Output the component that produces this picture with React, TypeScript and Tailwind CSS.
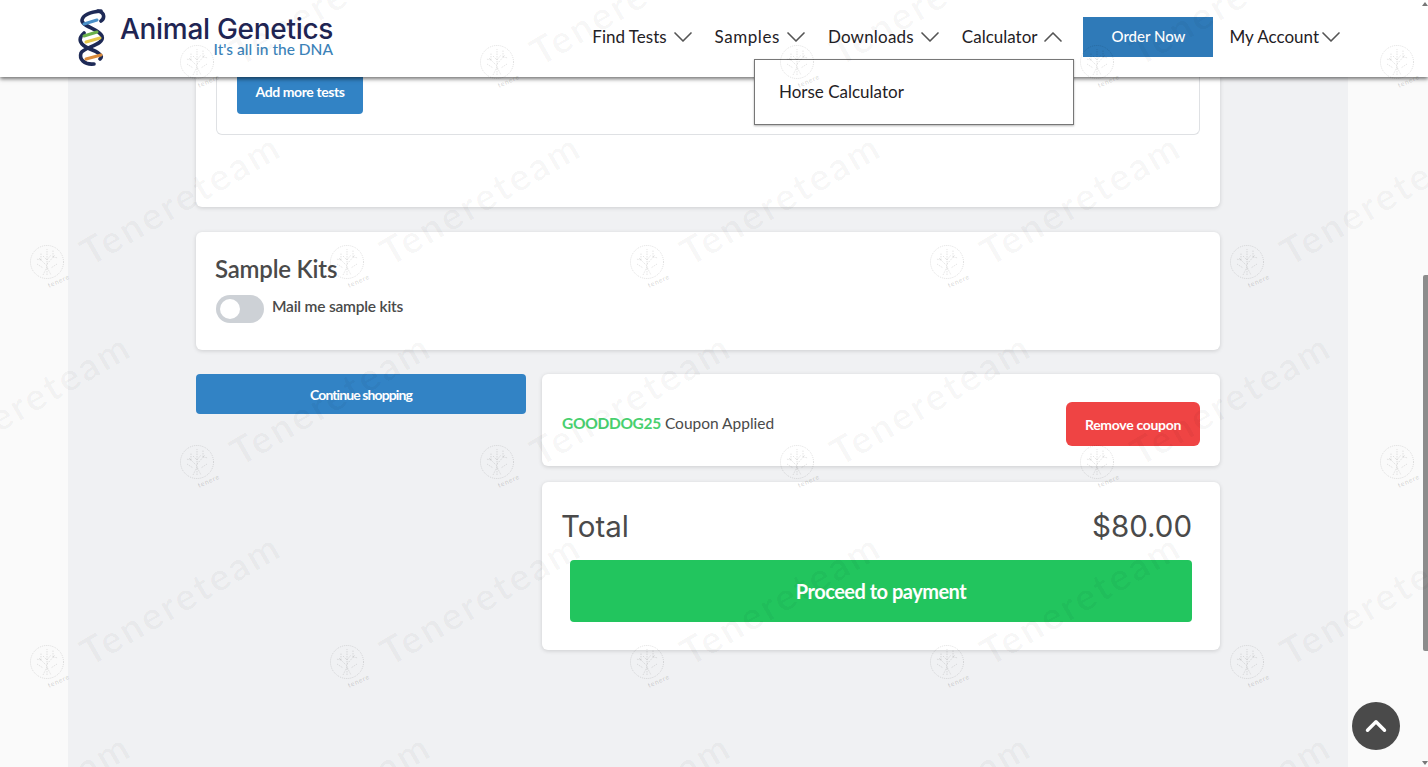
import React from "react";
import { ChevronDown, ChevronUp } from "lucide-react";

const stamps: { x: number; y: number }[] = [];
const marks: { x: number; y: number }[] = [];
[
  { y: 65, x0: 197 },
  { y: 265, x0: 47 },
  { y: 465, x0: 197 },
  { y: 665, x0: 47 },
].forEach((row) => {
  for (let x = row.x0; x < 1428; x += 300) stamps.push({ x, y: row.y });
});
[
  { y: 0, x0: 230 },
  { y: 200, x0: 80 },
  { y: 400, x0: -70 },
  { y: 600, x0: 80 },
  { y: 800, x0: -70 },
].forEach((row) => {
  for (let x = row.x0; x < 1428; x += 300) marks.push({ x, y: row.y });
});

const Logo = () => (
  <svg width="32" height="60" viewBox="0 0 32 60" fill="none" strokeLinecap="round">
    <path d="M25 2 C15 3 7 6 6 11 C5 17 23 20 26 27 C29 36 8 38 5 44 C3 50 8 56 18 55" stroke="#1e2a56" strokeWidth="3.6" />
    <path d="M22 2 C30 4 28 10 25 12 M8 24 C1 30 4 36 14 40 C22 43 28 47 24 50" stroke="#1e2a56" strokeWidth="3.6" />
    <path d="M8 15 L21 11" stroke="#4a90c8" strokeWidth="3" />
    <path d="M8 27 L21 23" stroke="#6ab04c" strokeWidth="3" />
    <path d="M10 33 L24 29" stroke="#e6c84a" strokeWidth="3" />
    <path d="M10 50 L25 46" stroke="#d98a3a" strokeWidth="3" />
  </svg>
);

const NavItem = ({ label, open, className }: { label: string; open?: boolean; className?: string }) => (
  <div className="flex items-center text-[17px] text-[#1f2125]">
    <span className={className}>{label}</span>
    {open ? (
      <ChevronUp size={32} strokeWidth={1.25} className="text-[#555]" />
    ) : (
      <ChevronDown size={32} strokeWidth={1.25} className="text-[#555]" />
    )}
  </div>
);

const Watermarks = () => (
  <div className="pointer-events-none absolute inset-0 z-40 overflow-hidden">
    {marks.map((m) => (
      <span
        key={`${m.x}-${m.y}`}
        className="absolute origin-left whitespace-nowrap text-[38px] font-bold tracking-[2.5px] text-black/[0.03]"
        style={{ left: m.x + 3, top: m.y + 26, transform: "rotate(-30deg)" }}
      >
        Tenereteam
      </span>
    ))}
    {stamps.map((s) => (
      <svg
        key={`${s.x}-${s.y}`}
        width="46"
        height="50"
        viewBox="0 0 46 50"
        fill="none"
        className="absolute"
        style={{ left: s.x - 18, top: s.y - 21 }}
      >
        <circle cx="18" cy="18" r="16.5" stroke="#000" strokeOpacity="0.12" strokeDasharray="1 1" />
        <path
          d="M18 31V16M14 31l4-8 4 8M18 22l-8-8M18 20l8-9M12 16l-5-1M12 16V9M24 13l5 1M24 13V6M18 16V5M14 12l4 4 4-5M8 20l6 4M28 20l-6 4"
          stroke="#000"
          strokeOpacity="0.1"
          strokeDasharray="1.5 1"
        />
        <text x="20" y="44" fontSize="7" fontWeight="700" letterSpacing="0.5" fill="#000" fillOpacity="0.14" transform="rotate(-24 20 44)">
          tenere
        </text>
      </svg>
    ))}
  </div>
);

export default function App() {
  return (
    <div className="relative h-[767px] overflow-hidden bg-[#fafafa] font-['Lato',sans-serif] text-[#4a4a4a]">
      <header className="relative z-30 flex h-[77px] items-center bg-white pl-[76px] pr-[81px] shadow-[0_2px_4px_rgba(0,0,0,0.55)]">
        <div className="flex items-center gap-[12px]">
          <Logo />
          <div className="mt-[-6px] flex flex-col items-end">
            <span className="font-['Inter',sans-serif] text-[28px] font-medium leading-[30px] tracking-[-0.3px] text-[#1f2553]">
              Animal Genetics
            </span>
            <span className="mt-[-4px] text-[15.5px] font-medium leading-[18px] text-[#3b82b8]">
              It's all in the DNA
            </span>
          </div>
        </div>
        <nav className="ml-auto mt-[-3px] flex items-center">
          <div className="flex items-center gap-[16px]">
            <NavItem label="Find Tests" />
            <NavItem label="Samples" className="tracking-[0.55px]" />
            <NavItem label="Downloads" className="tracking-[0.2px]" />
            <NavItem label="Calculator" open />
          </div>
          <button className="ml-[14px] flex h-[40px] w-[130px] items-center justify-center bg-[#2f7ab8] pb-[2px] text-[15px] font-medium text-white">
            Order Now
          </button>
          <div className="ml-[16px] flex items-center text-[17px] text-[#1f2125]">
            <span>My Account</span>
            <ChevronDown size={32} strokeWidth={1.25} className="ml-[-4px] text-[#555]" />
          </div>
        </nav>
        <div className="absolute left-[754px] top-[59px] h-[66px] w-[320px] border border-[#777] bg-white px-[24px] pt-[20px] text-[17px] leading-[24px] text-[#1f2125] shadow-[0_1px_2px_rgba(0,0,0,0.3)]">
          Horse Calculator
        </div>
      </header>

      <main className="ml-[68px] h-[690px] w-[1280px] bg-[#f0f1f3]">
        <div className="ml-[128px] flex w-[1024px] flex-col gap-[25px]">
          <section className="rounded-b-[6px] bg-white px-[20px] pb-[72px] shadow-[0_1px_4px_rgba(0,0,0,0.15)]">
            <div className="h-[58px] rounded-b-[6px] border border-t-0 border-[#dfe1e4] pl-[20px]">
              <button className="flex h-[37px] w-[126px] items-center justify-center rounded-b-[4px] bg-[#3283c5] pb-[8px] text-[14px] font-bold tracking-[-0.4px] text-white">
                Add more tests
              </button>
            </div>
          </section>

          <section className="h-[118px] rounded-[6px] bg-white px-[20px] pt-[21px] shadow-[0_1px_4px_rgba(0,0,0,0.15)]">
            <h2 className="ml-[-1px] text-[24px] font-semibold leading-[32px] tracking-[-0.2px] text-[#4a4a4a]">Sample Kits</h2>
            <div className="mt-[10px] flex items-center gap-[8px]">
              <div className="flex h-[28px] w-[48px] items-center rounded-full bg-[#cdd1d6] pl-[4px]">
                <div className="h-[20px] w-[20px] rounded-full bg-white" />
              </div>
              <span className="relative top-[-2px] text-[15.5px] font-semibold tracking-[-0.2px]">Mail me sample kits</span>
            </div>
          </section>

          <div className="mt-[-1px] flex items-start gap-[16px]">
            <button className="flex h-[40px] w-[330px] items-center justify-center rounded-[4px] bg-[#3283c5] text-[14px] font-bold tracking-[-0.9px] text-white">
              Continue shopping
            </button>
            <div className="flex flex-1 flex-col gap-[16px]">
              <section className="flex h-[92px] items-center justify-between rounded-[6px] bg-white pl-[20px] pr-[20px] shadow-[0_1px_4px_rgba(0,0,0,0.15)]">
                <p className="relative top-[4px] text-[15.5px]">
                  <span className="font-bold tracking-[-0.3px] text-[#48d06f]">GOODDOG25</span> Coupon Applied
                </p>
                <button className="relative top-[4px] flex h-[44px] w-[134px] items-center justify-center rounded-[6px] bg-[#ef4444] text-[14px] font-bold tracking-[-0.3px] text-white">
                  Remove coupon
                </button>
              </section>
              <section className="h-[168px] rounded-[6px] bg-white px-[20px] pt-[24px] shadow-[0_1px_4px_rgba(0,0,0,0.15)]">
                <div className="flex items-center justify-between pr-[8px] font-['Inter',sans-serif] text-[29.5px] leading-[40px]">
                  <span className="ml-[-1px]">Total</span>
                  <span>$80.00</span>
                </div>
                <div className="pl-[8px]">
                  <button className="mt-[14px] flex h-[62px] w-[622px] items-center justify-center rounded-[4px] bg-[#22c55e] text-[20px] font-bold tracking-[-0.5px] text-white">
                    Proceed to payment
                  </button>
                </div>
              </section>
            </div>
          </div>
        </div>
      </main>

      <div className="absolute right-0 top-[275px] z-30 h-[376px] w-[5px] rounded-l-[2px] bg-[#8c8c8c]" />
      <div className="absolute right-0 top-[2px] z-30 h-0 w-0 border-x-[3px] border-b-[4px] border-x-transparent border-b-[#777]" />
      <div className="absolute bottom-[2px] right-0 z-30 h-0 w-0 border-x-[3px] border-t-[4px] border-x-transparent border-t-[#777]" />
      <button className="absolute left-[1352px] top-[702px] z-50 flex h-[48px] w-[48px] items-center justify-center rounded-full bg-[#4a4a4a]">
        <ChevronUp size={34} strokeWidth={2.4} className="text-white" />
      </button>
      <Watermarks />
    </div>
  );
}
